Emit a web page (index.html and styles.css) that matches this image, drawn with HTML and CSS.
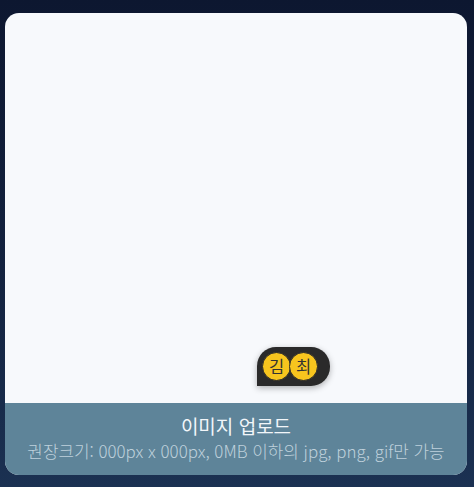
FILE: index.html
```html
<!DOCTYPE html>
<html lang="ko">
<head>
<meta charset="utf-8">
<link rel="stylesheet" href="styles.css">
</head>
<body>
<div class="card">
  <div class="preview">
    <div class="bubble">
      <span class="avatar">김</span>
      <span class="avatar">최</span>
    </div>
  </div>
  <div class="band">
    <div class="title">이미지 업로드</div>
    <div class="hint">권장크기: 000px x 000px, 0MB 이하의 jpg, png, gif만 가능</div>
  </div>
</div>
</body>
</html>
```
FILE: styles.css
```css
html, body {
  margin: 0;
  padding: 0;
}
body {
  width: 474px;
  height: 487px;
  background: linear-gradient(180deg, #0d1730 0%, #13223f 55%, #1b3152 100%);
  font-family: "Noto Sans CJK KR", "Noto Sans", sans-serif;
  overflow: hidden;
}
.card {
  margin: 13px 7px 0 5px;
  height: 462px;
  border-radius: 14px;
  overflow: hidden;
  display: flex;
  flex-direction: column;
  background: #f7f9fc;
}
.preview {
  flex: 1;
  position: relative;
}
.band {
  height: 72px;
  background: #5e8499;
  display: flex;
  flex-direction: column;
  align-items: center;
  padding-top: 10px;
  box-sizing: border-box;
}
.title {
  color: #f2f6f9;
  font-size: 19px;
  line-height: 26px;
}
.hint {
  color: #bfd1dc;
  font-size: 16.9px;
  font-weight: 300;
  line-height: 24px;
  margin-top: 0;
  white-space: nowrap;
}
.bubble {
  position: absolute;
  left: 252px;
  top: 334px;
  height: 39px;
  padding: 0 12px 0 5px;
  background: #2a2a2a;
  border-radius: 19px 19px 19px 0;
  display: flex;
  align-items: center;
  box-shadow: 0 2px 6px rgba(0, 0, 0, 0.3);
}
.avatar {
  width: 27px;
  height: 27px;
  border-radius: 50%;
  background: #f7c51e;
  border: 1.5px solid #2a2a2a;
  color: #333;
  font-size: 16.5px;
  display: flex;
  align-items: center;
  justify-content: center;
  line-height: 1;
}
.avatar + .avatar {
  margin-left: -2px;
}
```
